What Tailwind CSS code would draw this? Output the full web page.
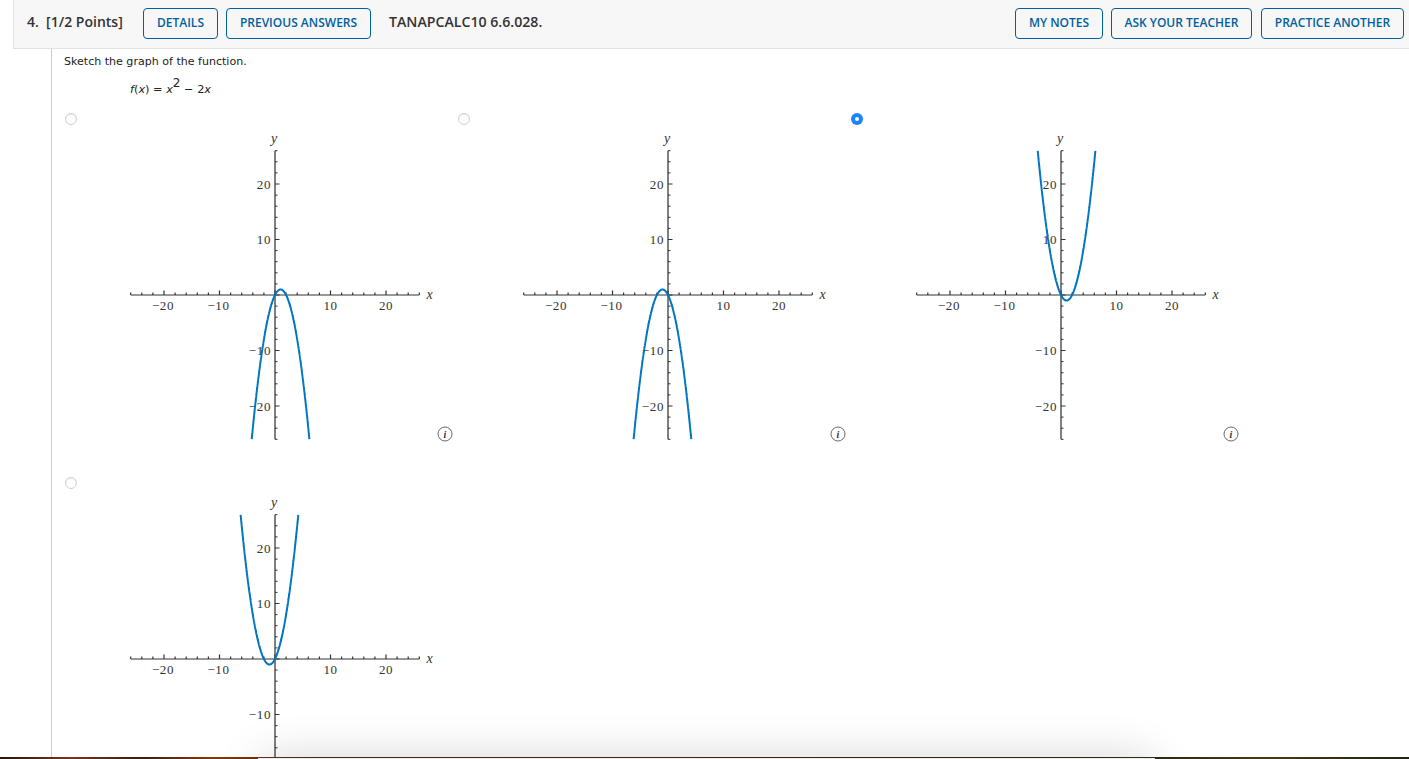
<!DOCTYPE html>
<html lang="en">
<head>
    <meta charset="UTF-8">
    <meta name="viewport" content="width=device-width, initial-scale=1.0">
    <title>Question 4</title>
    <script src="https://cdn.jsdelivr.net/npm/@tailwindcss/browser@4"></script>
</head>
<body class="bg-white">
<div class="relative h-[759px] overflow-hidden font-['Open_Sans',sans-serif]">
    <!-- question header -->
    <div class="ml-[13px] h-[49px] flex items-start pt-2 bg-[#f7f7f7] border-l border-b border-[#e2e2e2]">
        <span class="ml-[13px] w-[116px] h-[31px] leading-[27px] text-[14px] font-semibold text-[#333]">4.&nbsp; [1/2 Points]</span>
        <button class="w-[75px] h-[31px] pb-[2px] rounded border border-[#00609f] text-[12px] font-semibold text-[#00609f]">DETAILS</button>
        <button class="ml-2 w-[145px] h-[31px] pb-[2px] rounded border border-[#00609f] text-[12px] font-semibold text-[#00609f]">PREVIOUS ANSWERS</button>
        <span class="ml-[18px] h-[31px] leading-[27px] text-[14.15px] font-semibold text-[#333]">TANAPCALC10 6.6.028.</span>
        <div class="ml-auto mr-[5px] flex gap-2">
            <button class="w-[88px] h-[31px] pb-[2px] rounded border border-[#00609f] text-[12px] font-semibold text-[#00609f]">MY NOTES</button>
            <button class="w-[141px] h-[31px] pb-[2px] rounded border border-[#00609f] text-[12px] font-semibold text-[#00609f]">ASK YOUR TEACHER</button>
            <button class="ml-px w-[143px] h-[31px] pb-[2px] rounded border border-[#00609f] text-[12px] font-semibold text-[#00609f]">PRACTICE ANOTHER</button>
        </div>
    </div>

    <!-- question body -->
    <div class="ml-[51px] pl-3 h-[710px] border-l border-[#cccccc] font-['DejaVu_Sans',sans-serif] text-[#222]">
        <p class="h-[24px] pt-[5px] text-[11.05px] leading-[16px]">Sketch the graph of the function.</p>
        <p class="ml-[66px] h-[40px] pt-[8px] text-[11.3px] leading-[18px]"><i>f</i>(<i>x</i>) = <i>x</i><sup class="text-[12px] leading-none">2</sup> &minus; 2<i>x</i></p>

        <div class="grid grid-cols-[393px_393px_393px] auto-rows-[364px]">
            <div class="flex items-start">
                <span class="ml-px w-3 h-3 mr-px rounded-full border border-[#cfcfcf] bg-white shadow-[inset_0_1px_1px_rgba(0,0,0,0.08)]"></span>
                <svg data-a="-1" data-b="2" class="graph w-[379px] h-[364px] font-['Liberation_Serif',serif] text-[13px] fill-[#333]"></svg>
            </div>
            <div class="flex items-start">
                <span class="ml-px w-3 h-3 mr-px rounded-full border border-[#cfcfcf] bg-white shadow-[inset_0_1px_1px_rgba(0,0,0,0.08)]"></span>
                <svg data-a="-1" data-b="-2" class="graph w-[379px] h-[364px] font-['Liberation_Serif',serif] text-[13px] fill-[#333]"></svg>
            </div>
            <div class="flex items-start">
                <span class="ml-px w-3 h-3 mr-px rounded-full bg-[#1b84fb] flex items-center justify-center"><span class="w-1 h-1 rounded-full bg-white"></span></span>
                <svg data-a="1" data-b="-2" class="graph w-[379px] h-[364px] font-['Liberation_Serif',serif] text-[13px] fill-[#333]"></svg>
            </div>
            <div class="flex items-start">
                <span class="ml-px w-3 h-3 mr-px rounded-full border border-[#cfcfcf] bg-white shadow-[inset_0_1px_1px_rgba(0,0,0,0.08)]"></span>
                <svg data-a="1" data-b="2" data-cut="1" class="graph w-[379px] h-[364px] font-['Liberation_Serif',serif] text-[13px] fill-[#333]"></svg>
            </div>
        </div>
    </div>

    <!-- window shadow and desktop strip along the bottom edge -->
    <div class="absolute left-[258px] w-[897px] top-[757px] h-[40px] rounded-t-[20px] shadow-[0_0_44px_rgba(0,0,0,0.17)]"></div>
    <div class="absolute left-0 right-0 bottom-0 h-[2px] bg-[linear-gradient(90deg,#2b1409,#6e3a1a_5%,#3d1f0e_10%,#7a3d12_15%,#4a2410_22%,#3a2410_60%,#2c2a10_82%,#4a3a10_90%,#1f2410)]"></div>
    <div class="absolute left-[258px] w-[897px] bottom-0 h-px bg-[#eeeeee]"></div>
</div>

<script>
    // origin of the plot inside each svg, 5.55px per unit, range -26..26
    const cx = 197, cy = 182, unit = 5.55, range = 26;

    function label(x, y, text, anchor) {
        return `<text x="${x}" y="${y}" text-anchor="${anchor}" letter-spacing="0.6">${text}</text>`;
    }

    function drawGraph(svg) {
        const a = Number(svg.dataset.a), b = Number(svg.dataset.b);
        const cut = svg.dataset.cut; // bottom row runs off the page
        let xTicks = '', yTicks = '', labels = '';

        for (let v = -range; v <= range; v += 2) {
            const len = v % 10 === 0 ? 4.5 : 2.5;
            xTicks += `M${cx + v * unit} ${cy}v${-len}`;
            yTicks += `M${cx} ${cy - v * unit}h${len}`;
        }

        [-20, -10, 10, 20].forEach(v => {
            const name = String(v).replace('-', '\u2212');
            labels += label(cx + v * unit - (v < 0 ? 1 : 0), cy + 15, name, 'middle');
            if (!(cut && v === -20)) labels += label(cx - 4, cy - v * unit + 4.5, name, 'end');
        });

        // parabola a*x^2 + b*x, cut off where it leaves the plot range
        let points = [];
        for (let x = -8; x <= 8; x += 0.005) {
            const y = a * x * x + b * x;
            if (Math.abs(y) <= range) points.push(`${(cx + x * unit).toFixed(2)},${(cy - y * unit).toFixed(2)}`);
        }

        const info = cut ? '' : `
            <circle cx="${cx + 170}" cy="${cy + 139}" r="7" fill="#fff" stroke="#444" stroke-width="0.8"/>
            <text x="${cx + 170}" y="${cy + 143}" text-anchor="middle" font-style="italic" font-weight="bold" font-size="10">i</text>`;

        svg.innerHTML = `
            <path d="M${cx} ${cy - range * unit}V${cy + range * unit}" fill="none" stroke="#808080" stroke-width="2"/>
            <path d="${yTicks}" fill="none" stroke="#333" stroke-width="1"/>
            <path d="${xTicks}M${cx - range * unit} ${cy}H${cx + range * unit}" fill="none" stroke="#333" stroke-width="1.2"/>
            ${labels}
            <text x="${cx - 4}" y="${cy - 152}" font-style="italic" font-size="14">y</text>
            <text x="${cx + 151.5}" y="${cy + 3.5}" font-style="italic" font-size="14">x</text>
            <polyline points="${points.join(' ')}" fill="none" stroke="#0075c2" stroke-width="2"/>${info}`;
    }

    document.querySelectorAll('.graph').forEach(drawGraph);
</script>
</body>
</html>
